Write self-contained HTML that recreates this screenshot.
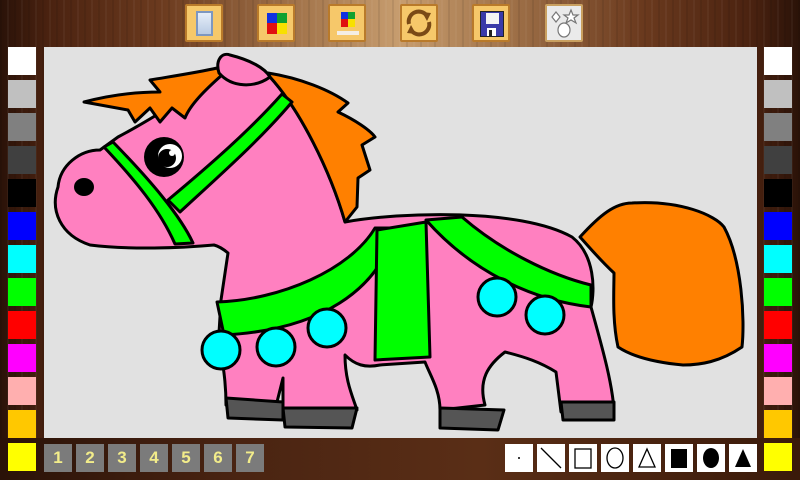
<!DOCTYPE html>
<html><head><meta charset="utf-8"><style>
*{margin:0;padding:0;box-sizing:border-box}
body{width:800px;height:480px;overflow:hidden;position:relative;font-family:"Liberation Sans",sans-serif;
background:linear-gradient(90deg,#2a1208 0%,#4a2210 6%,#6b3a1e 20%,#a5774d 38%,#c79d6f 50%,#a5774d 62%,#6b3a1e 80%,#4a2210 94%,#2a1208 100%);}
.wood{position:absolute;left:0;top:0;width:800px;height:480px;background:repeating-linear-gradient(90deg,rgba(0,0,0,.08) 0 2px,transparent 2px 7px,rgba(255,255,255,.04) 7px 9px,transparent 9px 14px)}
.bot{position:absolute;left:0;top:438px;width:800px;height:42px;background:linear-gradient(90deg,#2a1208,#4a2412 30%,#5a2e16 60%,#3a1a0a)}
.canvas{position:absolute;left:44px;top:47px;width:713px;height:391px;background:#e1e1e1}
.sw{position:absolute;width:28px;height:28px}
.tb{position:absolute;top:4px;width:38px;height:38px;background:#f6c86a;border:2px solid #b97a2a;border-radius:2px}
.num{position:absolute;top:444px;width:28px;height:28px;background:#7b7b7b;color:#f2ec8a;font-weight:bold;font-size:17px;text-align:center;line-height:28px}
</style></head><body>
<div class="wood"></div>
<div class="bot"></div>
<div class="canvas"></div>

<div class="tb" style="left:185px"><div style="position:absolute;left:9px;top:5px;width:17px;height:25px;background:linear-gradient(#e6eef8,#b9cbe4);border:2px solid #7d97c0"></div></div>
<div class="tb" style="left:257px"><div style="position:absolute;left:8px;top:7px;width:10px;height:10px;background:#1030e0"></div><div style="position:absolute;left:18px;top:7px;width:10px;height:10px;background:#10a030"></div><div style="position:absolute;left:8px;top:17px;width:10px;height:11px;background:#e01010"></div><div style="position:absolute;left:18px;top:17px;width:10px;height:11px;background:#f8e000"></div></div>
<div class="tb" style="left:328px"><div style="position:absolute;left:11px;top:6px;width:7px;height:7px;background:#1030e0"></div><div style="position:absolute;left:18px;top:6px;width:7px;height:7px;background:#10a030"></div><div style="position:absolute;left:11px;top:13px;width:7px;height:8px;background:#e01010"></div><div style="position:absolute;left:18px;top:13px;width:7px;height:8px;background:#f8e000"></div><div style="position:absolute;left:7px;top:25px;width:22px;height:4px;background:#f4eee4"></div></div>
<div class="tb" style="left:400px"><svg width="34" height="34" viewBox="0 0 34 34"><path d="M7 18 A10 10 0 0 1 25 10" stroke="#7a4a16" stroke-width="4" fill="none"/><path d="M27 16 A10 10 0 0 1 9 24" stroke="#7a4a16" stroke-width="4" fill="none"/><path d="M20 6 L29 7 L25 15Z" fill="#7a4a16"/><path d="M14 28 L5 27 L9 19Z" fill="#7a4a16"/></svg></div>
<div class="tb" style="left:472px"><div style="position:absolute;left:6px;top:5px;width:24px;height:26px;background:#3a3aa8;border:1px solid #222"><div style="position:absolute;left:5px;top:1px;width:13px;height:11px;background:#f4f4f4"></div><div style="position:absolute;left:6px;top:16px;width:9px;height:8px;background:#fff"><div style="position:absolute;left:2px;top:2px;width:3px;height:6px;background:#222"></div></div></div></div>
<div class="tb" style="left:545px;background:#eaeaea;border-color:#c9a060"><svg width="34" height="34" viewBox="0 0 34 34" fill="#fff" stroke="#777" stroke-width="1.2"><path d="M9 6 L13 11 L9 16 L5 11Z"/><path d="M24 4 L26 9 L31 9 L27 12 L29 17 L24 14 L19 17 L21 12 L17 9 L22 9Z"/><ellipse cx="17" cy="24" rx="6" ry="7"/></svg></div>

<div class="sw" style="left:8px;top:47px;background:#fff"></div><div class="sw" style="left:764px;top:47px;background:#fff"></div>
<div class="sw" style="left:8px;top:80px;background:#c0c0c0"></div><div class="sw" style="left:764px;top:80px;background:#c0c0c0"></div>
<div class="sw" style="left:8px;top:113px;background:#808080"></div><div class="sw" style="left:764px;top:113px;background:#808080"></div>
<div class="sw" style="left:8px;top:146px;background:#404040"></div><div class="sw" style="left:764px;top:146px;background:#404040"></div>
<div class="sw" style="left:8px;top:179px;background:#000"></div><div class="sw" style="left:764px;top:179px;background:#000"></div>
<div class="sw" style="left:8px;top:212px;background:#0000ff"></div><div class="sw" style="left:764px;top:212px;background:#0000ff"></div>
<div class="sw" style="left:8px;top:245px;background:#00ffff"></div><div class="sw" style="left:764px;top:245px;background:#00ffff"></div>
<div class="sw" style="left:8px;top:278px;background:#00ff00"></div><div class="sw" style="left:764px;top:278px;background:#00ff00"></div>
<div class="sw" style="left:8px;top:311px;background:#ff0000"></div><div class="sw" style="left:764px;top:311px;background:#ff0000"></div>
<div class="sw" style="left:8px;top:344px;background:#ff00ff"></div><div class="sw" style="left:764px;top:344px;background:#ff00ff"></div>
<div class="sw" style="left:8px;top:377px;background:#ffafaf"></div><div class="sw" style="left:764px;top:377px;background:#ffafaf"></div>
<div class="sw" style="left:8px;top:410px;background:#ffc800"></div><div class="sw" style="left:764px;top:410px;background:#ffc800"></div>
<div class="sw" style="left:8px;top:443px;background:#ffff00"></div><div class="sw" style="left:764px;top:443px;background:#ffff00"></div>

<div class="num" style="left:44px">1</div><div class="num" style="left:76px">2</div><div class="num" style="left:108px">3</div><div class="num" style="left:140px">4</div><div class="num" style="left:172px">5</div><div class="num" style="left:204px">6</div><div class="num" style="left:236px">7</div>

<svg style="position:absolute;left:0;top:0" width="800" height="480">
<g fill="#fff"><rect x="505" y="444" width="28" height="28"/><rect x="537" y="444" width="28" height="28"/><rect x="569" y="444" width="28" height="28"/><rect x="601" y="444" width="28" height="28"/><rect x="633" y="444" width="28" height="28"/><rect x="665" y="444" width="28" height="28"/><rect x="697" y="444" width="28" height="28"/><rect x="729" y="444" width="28" height="28"/></g>
<circle cx="519" cy="458" r="1" fill="#000"/>
<line x1="541" y1="448" x2="561" y2="468" stroke="#000" stroke-width="1.3"/>
<rect x="575" y="449" width="16" height="19" fill="none" stroke="#000" stroke-width="1.3"/>
<ellipse cx="615" cy="458" rx="8" ry="10" fill="none" stroke="#000" stroke-width="1.3"/>
<path d="M647 449 L655 467 L639 467Z" fill="none" stroke="#000" stroke-width="1.3"/>
<rect x="671" y="449" width="16" height="19" fill="#000"/>
<ellipse cx="711" cy="458" rx="8" ry="10" fill="#000"/>
<path d="M743 449 L751 467 L735 467Z" fill="#000"/>

<g stroke="#000" stroke-width="3" stroke-linejoin="round">
<path d="M580 237 C600 215 615 203 632 203 C680 200 715 215 724 227 C742 260 745 320 742 347 C720 362 700 365 683 365 C650 362 630 355 618 347 C612 320 614 290 614 273 C600 260 590 248 580 237Z" fill="#ff8000"/>
<path d="M90 245 C60 235 50 210 58 187 C60 165 80 150 100 150 L118 137 C150 120 190 95 219 73 L270 77 C300 110 330 170 345 222 C400 212 520 208 572 237 C595 255 595 290 591 307 C600 340 612 380 614 410 L561 412 L556 372 C540 362 525 357 505 352 C488 365 478 380 485 405 L440 410 C440 390 430 375 425 362 L380 365 C365 368 355 365 345 355 C345 380 352 395 357 410 L283 410 L283 378 L275 410 L226 405 C226 370 219 350 219 333 L221 300 L228 253 C222 248 218 246 214 245 C180 248 130 250 90 245Z" fill="#ff80c0"/>
<path d="M226 398 L283 402 L283 420 L228 418Z" fill="#555"/>
<path d="M283 408 L357 408 L352 428 L285 427Z" fill="#555"/>
<path d="M440 408 L504 410 L498 430 L440 428Z" fill="#555"/>
<path d="M561 402 L614 402 L614 420 L563 420Z" fill="#555"/>
<path d="M84 102 C110 95 135 92 160 92 L150 80 C180 75 200 72 217 68 L222 75 C205 90 190 105 185 118 L172 108 L160 122 L150 108 L135 122 L128 110 Z" fill="#ff8000"/>
<path d="M268 73 C300 78 330 90 348 103 L338 112 C355 120 370 130 375 137 L362 145 L370 170 L358 178 L357 207 L345 222 C330 170 300 110 270 77Z" fill="#ff8000"/>
<path d="M219 73 C215 60 222 52 230 55 C250 60 265 68 270 77 C255 88 232 88 219 73Z" fill="#ff80c0"/>
<path d="M104 147 L113 142 C150 180 180 215 193 243 L175 244 C160 210 135 180 104 147Z" fill="#00ff00"/>
<path d="M168 200 L180 212 C220 175 260 140 292 102 L282 94 C250 130 210 165 168 200Z" fill="#00ff00"/>
<path d="M217 302 C280 300 350 270 375 228 L395 228 C380 290 320 330 224 335Z" fill="#00ff00"/>
<path d="M377 230 L426 222 L430 357 L375 360Z" fill="#00ff00"/>
<path d="M426 220 L462 217 C500 250 550 275 591 285 L591 307 C530 300 470 270 426 220Z" fill="#00ff00"/>
<circle cx="221" cy="350" r="19" fill="#00ffff"/>
<circle cx="276" cy="347" r="19" fill="#00ffff"/>
<circle cx="327" cy="328" r="19" fill="#00ffff"/>
<circle cx="497" cy="297" r="19" fill="#00ffff"/>
<circle cx="545" cy="315" r="19" fill="#00ffff"/>
<circle cx="164" cy="157" r="20" fill="#000" stroke="none"/>
<circle cx="170" cy="156" r="12" fill="#fff" stroke="none"/>
<circle cx="167" cy="158" r="9" fill="#000" stroke="none"/>
<circle cx="172" cy="153" r="3" fill="#fff" stroke="none"/>
<ellipse cx="84" cy="187" rx="10" ry="9" fill="#000" stroke="none"/>
</g>
</svg>
</body></html>
